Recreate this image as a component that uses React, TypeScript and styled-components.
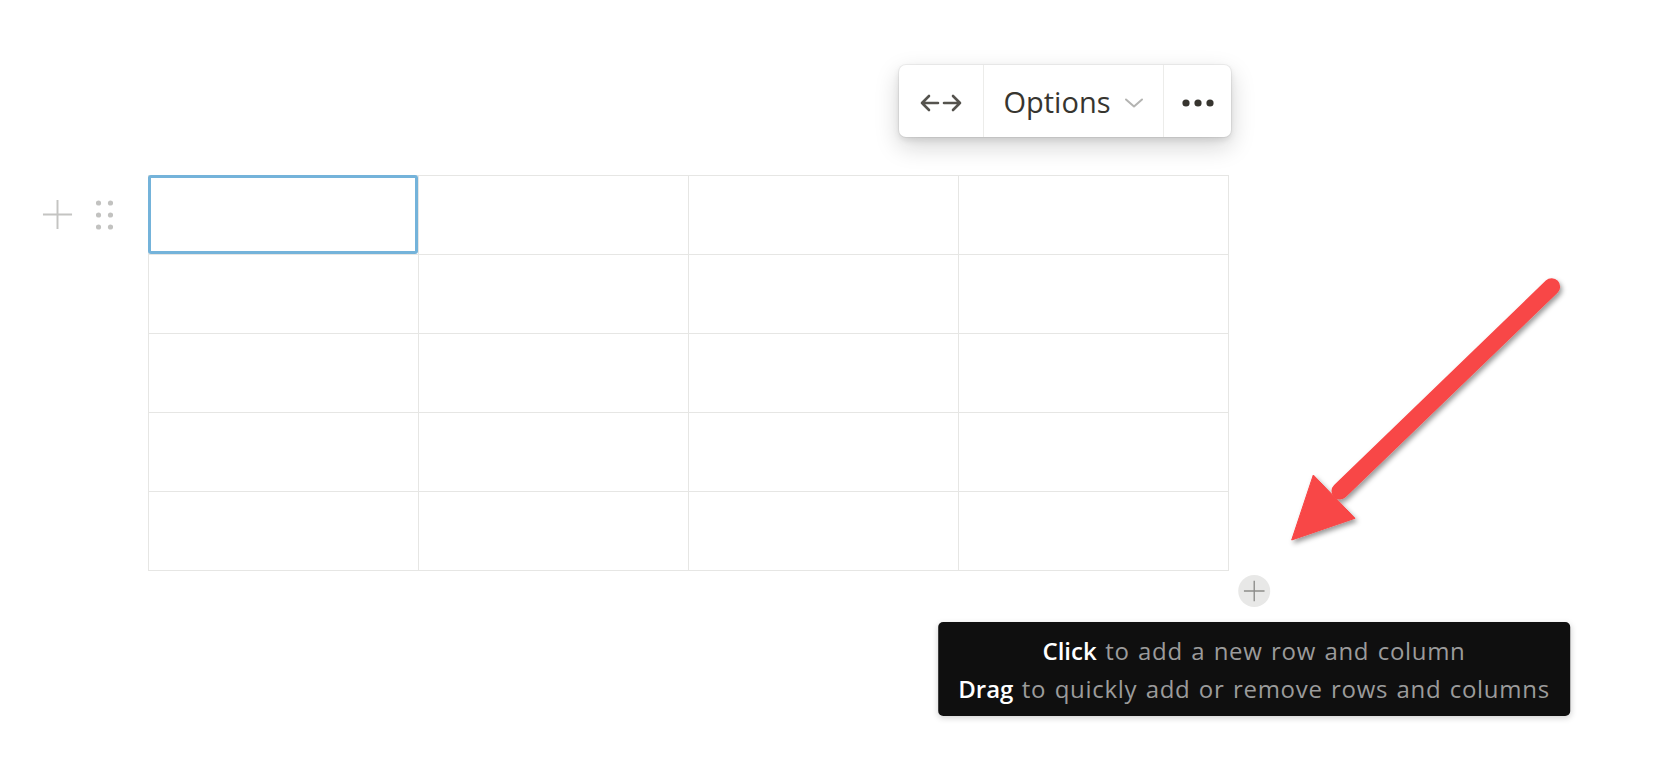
import React from 'react'
import styled, { createGlobalStyle } from 'styled-components'

const GlobalStyle = createGlobalStyle`
  html, body {
    margin: 0;
    padding: 0;
    background: #ffffff;
  }
  body {
    font-family: "Segoe UI", "Open Sans", "Noto Sans", sans-serif;
    color: #37352f;
  }
`

const ROWS = 5
const COLS = 4

const Page = styled.div`
  position: relative;
  width: 1675px;
  height: 769px;
  overflow: hidden;
  background: #fff;
`

const ToolbarRow = styled.div`
  display: flex;
  padding: 65px 0 0 899px;
`

const Toolbar = styled.div`
  display: flex;
  height: 72px;
  background: #fff;
  border-radius: 7px;
  box-shadow: rgba(15, 15, 15, 0.05) 0 0 0 1px, rgba(15, 15, 15, 0.1) 0 3px 6px,
    rgba(15, 15, 15, 0.18) 0 9px 24px;
`

const Segment = styled.div<{ $width: number; $last?: boolean }>`
  display: flex;
  align-items: center;
  justify-content: center;
  gap: 13px;
  width: ${(p) => p.$width}px;
  padding-top: 3px;
  border-right: ${(p) => (p.$last ? 'none' : '1px solid #ececea')};
  box-sizing: border-box;
`

const OptionsLabel = styled.span`
  font-size: 29px;
  line-height: 1;
  color: #37352f;
  padding-bottom: 2px;
`

const Block = styled.div`
  display: flex;
  margin-top: 38px;
`

const Handles = styled.div`
  display: flex;
  align-items: center;
  gap: 23px;
  width: 148px;
  height: 79px;
  padding-left: 42px;
  box-sizing: border-box;
  flex-shrink: 0;
`

const TableWrap = styled.div`
  position: relative;
`

const Grid = styled.div`
  display: grid;
  grid-template-columns: repeat(${COLS}, 270px);
  grid-auto-rows: 79px;
  border-top: 1px solid #e6e6e4;
  border-left: 1px solid #e6e6e4;
`

const Cell = styled.div<{ $selected?: boolean }>`
  position: relative;
  box-sizing: border-box;
  border-right: 1px solid #e6e6e4;
  border-bottom: 1px solid #e6e6e4;
  background: #fff;

  &::after {
    content: '';
    display: ${(p) => (p.$selected ? 'block' : 'none')};
    position: absolute;
    inset: -1px 0 0 -1px;
    border: 3px solid #74b3da;
    border-radius: 3px;
  }
`

const AddCorner = styled.div`
  position: absolute;
  left: calc(100% + 25px);
  top: calc(100% + 4px);
  transform: translateX(-50%);
  display: flex;
  flex-direction: column;
  align-items: center;
  gap: 15px;
`

const AddCircle = styled.div`
  display: flex;
  align-items: center;
  justify-content: center;
  width: 32px;
  height: 32px;
  border-radius: 50%;
  background: #e8e8e7;
`

const Tooltip = styled.div`
  white-space: nowrap;
  padding: 10px 20px 8px;
  background: #0f0f0f;
  border-radius: 5px;
  box-shadow: 0 2px 6px rgba(0, 0, 0, 0.18);
  text-align: center;
  font-size: 24px;
  line-height: 38px;
  letter-spacing: 0.7px;
  word-spacing: 1.5px;
  color: #9b9b9b;
`

const Strong = styled.span`
  color: #ffffff;
  font-weight: 600;
  letter-spacing: 0;
`

const Annotation = styled.svg`
  position: absolute;
  left: 1270px;
  top: 270px;
  overflow: visible;
`

const SwapIcon = () => (
  <svg width="44" height="20" viewBox="0 0 44 20" fill="none" stroke="#55534e" strokeWidth="2.6" strokeLinecap="round" strokeLinejoin="round">
    <path d="M19 10H3M10 3L3 10l7 7" />
    <path d="M25 10h16M34 3l7 7-7 7" />
  </svg>
)

const Chevron = () => (
  <svg width="20" height="10" viewBox="0 0 20 10" fill="none" stroke="#b4b4b2" strokeWidth="2" strokeLinecap="round" strokeLinejoin="round">
    <path d="M2 1.5l8 7 8-7" />
  </svg>
)

const MoreIcon = () => (
  <svg width="32" height="8" viewBox="0 0 32 8" fill="#37352f">
    <circle cx="4" cy="4" r="3.6" />
    <circle cx="16" cy="4" r="3.6" />
    <circle cx="28" cy="4" r="3.6" />
  </svg>
)

const PlusIcon = ({ size, color, weight }: { size: number; color: string; weight: number }) => (
  <svg width={size} height={size} viewBox="0 0 32 32" fill="none" stroke={color} strokeWidth={weight}>
    <path d="M16 1v30M1 16h30" />
  </svg>
)

const DragIcon = () => (
  <svg width="17" height="30" viewBox="0 0 17 30" fill="#c2c2c0">
    {[3, 15, 27].map((y) =>
      [2.5, 14.5].map((x) => <circle key={`${x}-${y}`} cx={x} cy={y} r="2.6" />)
    )}
  </svg>
)

const Arrow = () => (
  <Annotation width="310" height="300" viewBox="0 0 310 300">
    <defs>
      <filter id="arrow-shadow" x="-20%" y="-20%" width="140%" height="140%">
        <feDropShadow dx="2" dy="3" stdDeviation="2.5" floodColor="#000" floodOpacity="0.4" />
      </filter>
    </defs>
    <g filter="url(#arrow-shadow)" fill="#f84646" stroke="#f84646">
      <line x1="281.7" y1="16.7" x2="70" y2="221" strokeWidth="17" strokeLinecap="round" />
      <polygon points="21.7,270 43.3,205 85,248.3" strokeWidth="1" strokeLinejoin="round" />
    </g>
  </Annotation>
)

const App: React.FC = () => {
  const cells = Array.from({ length: ROWS * COLS }, (_, i) => i)

  return (
    <Page>
      <GlobalStyle />
      <ToolbarRow>
        <Toolbar>
          <Segment $width={85}>
            <SwapIcon />
          </Segment>
          <Segment $width={180}>
            <OptionsLabel>Options</OptionsLabel>
            <Chevron />
          </Segment>
          <Segment $width={67} $last>
            <MoreIcon />
          </Segment>
        </Toolbar>
      </ToolbarRow>

      <Block>
        <Handles>
          <PlusIcon size={31} color="#c4c4c2" weight={2} />
          <DragIcon />
        </Handles>
        <TableWrap>
          <Grid>
            {cells.map((i) => (
              <Cell key={i} $selected={i === 0} />
            ))}
          </Grid>
          <AddCorner>
            <AddCircle>
              <PlusIcon size={22} color="#8d8d8b" weight={2} />
            </AddCircle>
            <Tooltip>
              <div>
                <Strong>Click</Strong> to add a new row and column
              </div>
              <div>
                <Strong>Drag</Strong> to quickly add or remove rows and columns
              </div>
            </Tooltip>
          </AddCorner>
        </TableWrap>
      </Block>

      <Arrow />
    </Page>
  )
}

export default App
